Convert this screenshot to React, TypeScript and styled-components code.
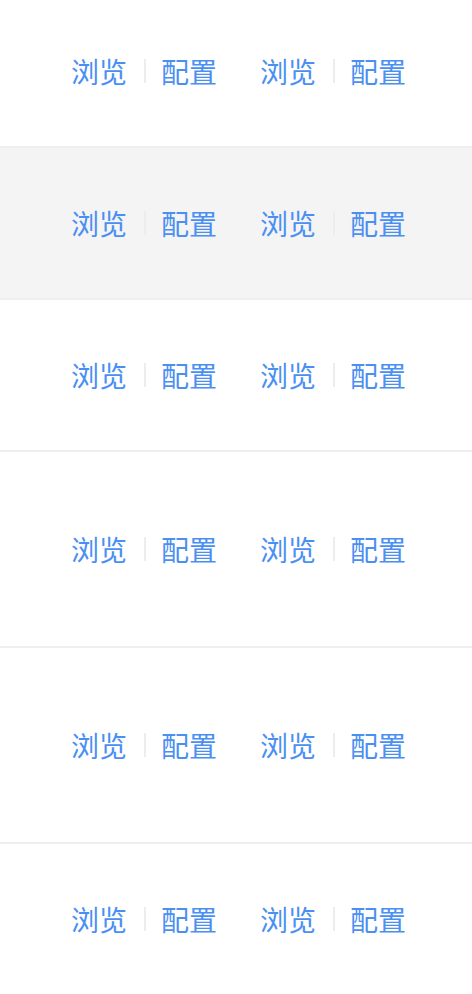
import styled, { createGlobalStyle } from "styled-components";

const GlobalStyle = createGlobalStyle`
    html, body {
        margin: 0;
        padding: 0;
        background: #ffffff;
        font-family: "Noto Sans CJK SC", "Noto Sans", sans-serif;
    }
`

// lift pushes the links up a bit inside the row (the first one sits higher)
const rows = [
    { height: 146, gray: false, lift: 5 },
    { height: 150, gray: true, lift: 0 },
    { height: 150, gray: false, lift: 0 },
    { height: 194, gray: false, lift: 0 },
    { height: 194, gray: false, lift: 0 },
    { height: 150, gray: false, lift: 0 },
]

const ActionGroup = () => (
    <StyledGroup>
        <StyledLink>浏览</StyledLink>
        <StyledDivider />
        <StyledLink>配置</StyledLink>
    </StyledGroup>
)

export default function App() {
    return (
        <>
            <GlobalStyle />
            <StyledList>
                {rows.map((row, i) => (
                    <StyledRow key={i} $height={row.height} $gray={row.gray} $lift={row.lift}>
                        <ActionGroup />
                        <ActionGroup />
                    </StyledRow>
                ))}
            </StyledList>
        </>
    )
}

const StyledList = styled.div`
    display: flex;
    flex-direction: column;
    width: 472px;
`
const StyledRow = styled.div<{ $height: number; $gray: boolean; $lift: number }>`
    display: flex;
    align-items: center;
    gap: 43px;
    box-sizing: border-box;
    height: ${p => p.$height + 2}px;
    padding-left: 71px;
    padding-bottom: ${p => p.$lift}px;
    background: ${p => (p.$gray ? "#f4f4f4" : "#ffffff")};
    border-bottom: 2px solid #efefef;
`
const StyledGroup = styled.div`
    display: flex;
    align-items: center;
`
const StyledLink = styled.span`
    font-size: 28px;
    line-height: 28px;
    color: #4a8ff2;
    cursor: pointer;
`
const StyledDivider = styled.span`
    width: 2px;
    height: 24px;
    margin: 0 15px 0 17px;
    background: #ededed;
`
